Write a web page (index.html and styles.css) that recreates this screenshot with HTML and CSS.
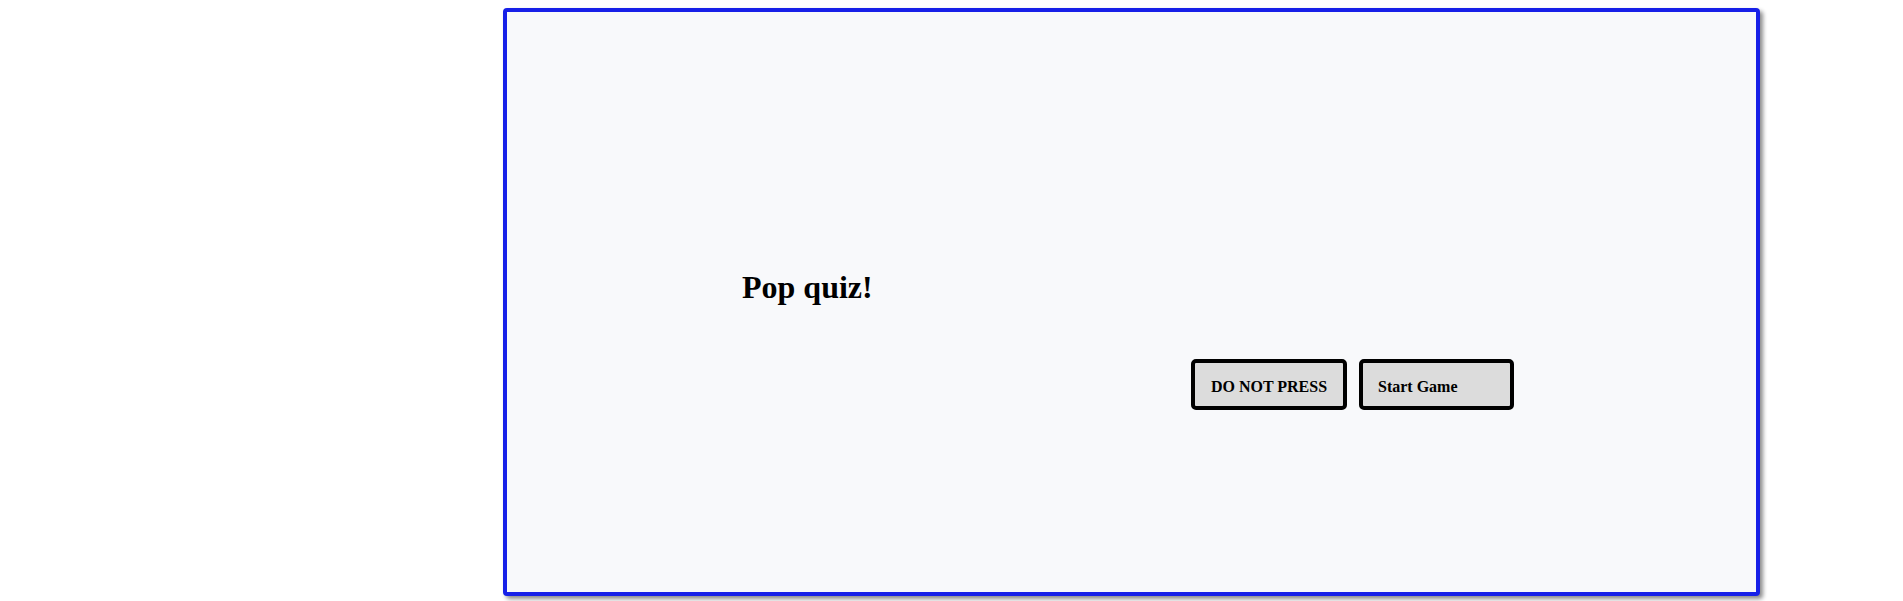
FILE: index.html
```html
<!DOCTYPE html>
<html>
<head>
<meta charset="utf-8">
<link rel="stylesheet" href="styles.css">
</head>
<body>
<main class="stage">
  <h1 class="title">Pop quiz!</h1>
  <div class="actions">
    <button class="btn btn-center">DO NOT PRESS</button>
    <button class="btn btn-left">Start Game</button>
  </div>
</main>
</body>
</html>
```
FILE: styles.css
```css
html, body {
  margin: 0;
  padding: 0;
  background: #ffffff;
}
body {
  padding: 8px;
  font-family: "Liberation Serif", "Times New Roman", serif;
  color: #000;
}
.stage {
  box-sizing: border-box;
  margin-left: 495px;
  width: 1257px;
  height: 588px;
  border: 4px solid #1720e8;
  border-radius: 4px;
  background: #f8f9fb;
  box-shadow: 3px 3px 4px rgba(0, 0, 0, 0.45);
  display: flex;
  flex-direction: column;
  align-items: flex-start;
  padding: 257px 0 0 235px;
}
.title {
  margin: 0;
  font-size: 32px;
  font-weight: bold;
  line-height: normal;
}
.actions {
  display: flex;
  gap: 12px;
  margin-top: 53px;
  margin-left: 449px;
}
.btn {
  box-sizing: border-box;
  width: 156px;
  height: 51px;
  border: 4px solid #000;
  border-radius: 5px;
  background: #dcdcdc;
  font-family: "Liberation Serif", "Times New Roman", serif;
  font-size: 16px;
  font-weight: bold;
  color: #000;
  line-height: normal;
  padding: 5px 0 0 0;
}
.btn-center {
  text-align: center;
}
.btn-left {
  width: 155px;
  text-align: left;
  padding-left: 15px;
}
```
